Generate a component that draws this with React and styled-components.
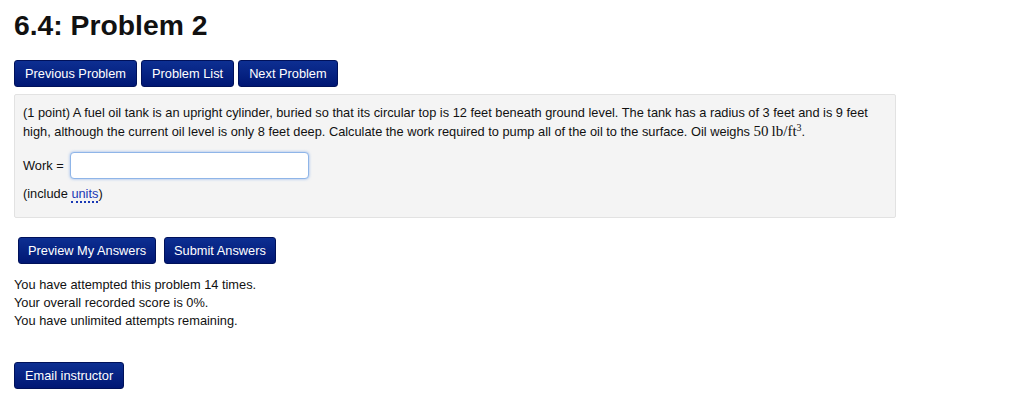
import React from 'react';
import styled, { createGlobalStyle } from 'styled-components';

const GlobalStyle = createGlobalStyle`
    body {
        margin: 0;
        background: #ffffff;
        font-family: 'Liberation Sans', Arial, Helvetica, sans-serif;
        color: #111111;
    }
`;

const Page = styled.div`
    padding: 9px 14px 0 14px;
    width: 882px;
`;

const Title = styled.h2`
    margin: 0;
    font-size: 28.3px;
    font-weight: bold;
    line-height: 32px;
    color: #111111;
`;

const ButtonRow = styled.div`
    display: flex;
    gap: ${(p) => p.gap || 4}px;
    margin-top: ${(p) => p.top || 0}px;
    padding-left: ${(p) => p.indent || 0}px;
`;

const NavButton = styled.button`
    height: 27px;
    padding: 0 ${(p) => p.pad || 10}px;
    border: 1px solid #00115a;
    border-radius: 3px;
    background: linear-gradient(to bottom, #0d2f92, #001774);
    color: #ffffff;
    font-family: 'Liberation Sans', Arial, Helvetica, sans-serif;
    font-size: 12.8px;
    cursor: pointer;
`;

const ProblemBox = styled.div`
    margin-top: 7px;
    background: #f4f4f4;
    border: 1px solid #e2e2e2;
    border-radius: 2px;
    padding: 8px 8px 14px 8px;
    font-size: 12.8px;
    line-height: 19px;
`;

const MathText = styled.span`
    font-family: 'Liberation Serif', 'Times New Roman', serif;
    font-size: 15px;
    line-height: 15px;
    sup {
        font-size: 10px;
        line-height: 10px;
        vertical-align: 5px;
    }
`;

const AnswerRow = styled.div`
    display: flex;
    align-items: center;
    gap: 6px;
    margin-top: 11px;
`;

const AnswerInput = styled.input`
    box-sizing: border-box;
    width: 239px;
    height: 27px;
    padding: 0 6px;
    border: 1px solid #8fb5e8;
    border-radius: 4px;
    box-shadow: 0 0 3px rgba(80, 140, 230, 0.6);
    background: #ffffff;
    font-size: 12px;
    outline: none;
`;

const Hint = styled.div`
    margin-top: 5px;
`;

const UnitsLink = styled.a`
    color: #1a39b5;
    text-decoration: none;
    border-bottom: 2px dotted #1a39b5;
`;

const Status = styled.div`
    margin-top: 12px;
    font-size: 12.8px;
    line-height: 18px;
`;

export default function App() {
    return (
        <>
            <GlobalStyle />
            <Page>
                <Title>6.4: Problem 2</Title>
                <ButtonRow top={19}>
                    <NavButton>Previous Problem</NavButton>
                    <NavButton>Problem List</NavButton>
                    <NavButton>Next Problem</NavButton>
                </ButtonRow>
                <ProblemBox>
                    <div>
                        (1 point) A fuel oil tank is an upright cylinder, buried so that its circular top is 12 feet
                        beneath ground level. The tank has a radius of 3 feet and is 9 feet high, although the current
                        oil level is only 8 feet deep. Calculate the work required to pump all of the oil to the
                        surface. Oil weighs{' '}
                        <MathText>
                            50&thinsp;lb/ft<sup>3</sup>
                        </MathText>
                        .
                    </div>
                    <AnswerRow>
                        <span>Work =</span>
                        <AnswerInput autoFocus defaultValue="" />
                    </AnswerRow>
                    <Hint>
                        (include <UnitsLink href="#">units</UnitsLink>)
                    </Hint>
                </ProblemBox>
                <ButtonRow top={19} gap={8} indent={4}>
                    <NavButton pad={9}>Preview My Answers</NavButton>
                    <NavButton pad={9}>Submit Answers</NavButton>
                </ButtonRow>
                <Status>
                    <div>You have attempted this problem 14 times.</div>
                    <div>Your overall recorded score is 0%.</div>
                    <div>You have unlimited attempts remaining.</div>
                </Status>
                <ButtonRow top={32}>
                    <NavButton>Email instructor</NavButton>
                </ButtonRow>
            </Page>
        </>
    );
}
